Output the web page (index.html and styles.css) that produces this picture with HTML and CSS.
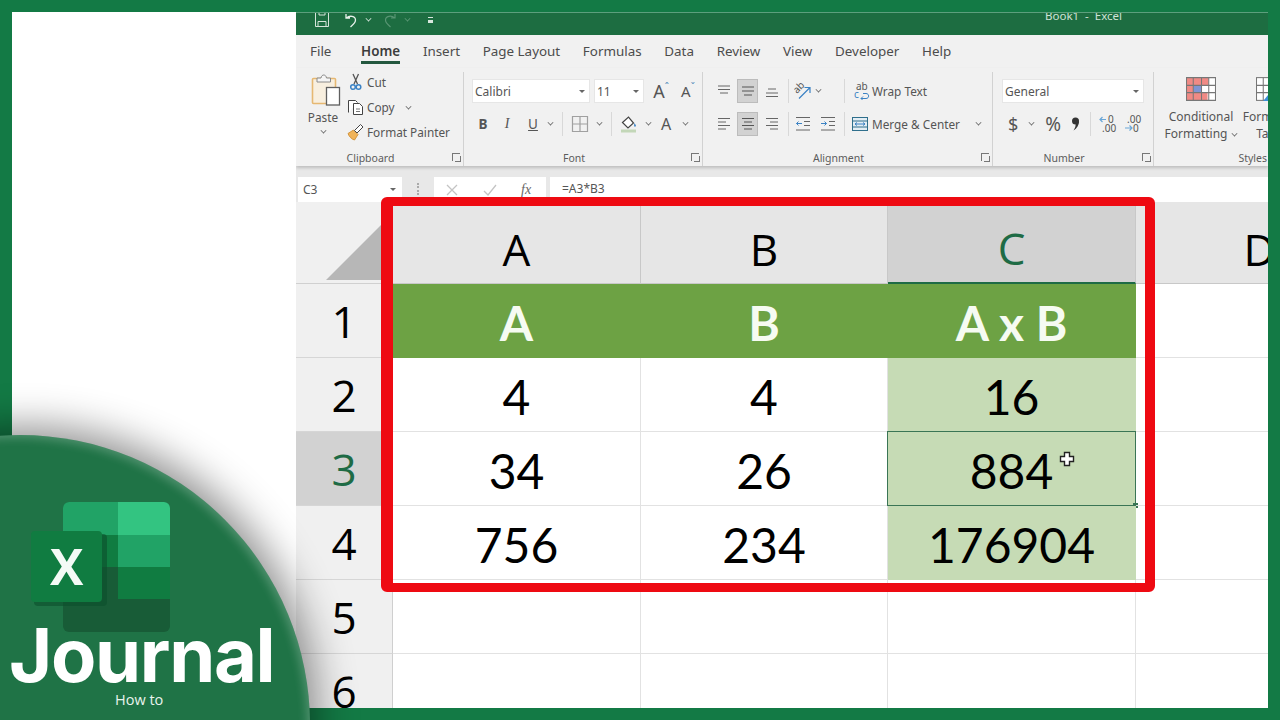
FILE: index.html
```html
<!DOCTYPE html>
<html lang="en">
<head>
<meta charset="utf-8">
<title>Book1 - Excel</title>
<link rel="stylesheet" href="styles.css">
</head>
<body>
<div class="frame">
  <div class="blank"></div>
  <main class="excel">
    <header class="titlebar">
      <div class="qat">
        <svg class="i16" viewBox="0 0 16 16"><path d="M1.500 -2h11l2 2v13.500h-13zM4 13.500v-5h8v5M5 -2v4h6v-4" fill="none" stroke="#d5e5da" stroke-width="1"/></svg>
        <svg class="i16 ml10" viewBox="0 0 16 16"><path d="M3 1v4h4M3.500 5c3-3 9-2 9 2 0 3-3 5-5 7" fill="none" stroke="#e8f1eb" stroke-width="1.300"/></svg>
        <span class="caret light"></span>
        <svg class="i16 ml8 dim" viewBox="0 0 16 16"><path d="M13 1v4h-4M12.500 5c-3-3-9-2-9 2 0 3 3 5 5 7" fill="none" stroke="#5f9a79" stroke-width="1.200"/></svg>
        <span class="caret dimcaret"></span>
        <span class="qatmore"></span>
      </div>
      <div class="doc-title">Book1 &nbsp;- &nbsp;Excel</div>
    </header>
    <nav class="tabs">
      <span class="tab t-file">File</span>
      <span class="tab active">Home</span>
      <span class="tab">Insert</span>
      <span class="tab">Page Layout</span>
      <span class="tab">Formulas</span>
      <span class="tab">Data</span>
      <span class="tab">Review</span>
      <span class="tab">View</span>
      <span class="tab">Developer</span>
      <span class="tab">Help</span>
    </nav>
    <section class="ribbon">
      <div class="group g-clip">
        <div class="g-body clip-body">
          <div class="paste">
            <svg class="paste-ico" viewBox="0 0 34 33"><rect x="5.500" y="5.500" width="23" height="25" rx="1" fill="#f8efdf" stroke="#e6b872" stroke-width="1.600"/><path d="M10 9V5h4c.5-4 5-4 5.500 0h4v4z" fill="#f5f5f5" stroke="#8a8a8a"/><rect x="19.500" y="14.500" width="13" height="17.500" fill="#fff" stroke="#5f5f5f" stroke-width="1.300"/></svg>
            <span class="paste-l">Paste</span>
            <span class="caret"></span>
          </div>
          <div class="clip-list">
            <div class="clip-row"><svg class="i18" viewBox="0 0 18 18"><path d="M6 1l4.500 10M11.500 1L7 11" fill="none" stroke="#555" stroke-width="1.300"/><circle cx="6" cy="14" r="2.300" fill="none" stroke="#3b82c4" stroke-width="1.500"/><circle cx="11.500" cy="14" r="2.300" fill="none" stroke="#3b82c4" stroke-width="1.500"/></svg><span>Cut</span></div>
            <div class="clip-row"><svg class="i18" viewBox="0 0 18 18"><path d="M1.500 14.500v-12h7l2 2" fill="#fff" stroke="#444"/><path d="M6.500 16.500v-11h6l3 3v8z" fill="#fff" stroke="#444"/><path d="M9 11h4M9 13.500h4" stroke="#777"/></svg><span>Copy</span><span class="caret after-copy"></span></div>
            <div class="clip-row"><svg class="i18" viewBox="0 0 18 18"><path d="M1 10.500l5.500-3.500 4.500 4.500-3.500 5.500c-2.500-.5-5.500-3.500-6.500-6.500z" fill="#f0b45a" stroke="#cf8f33" stroke-width=".9"/><path d="M7.500 7.500l6-6 2.500 2.500-6 6z" fill="#fff" stroke="#444"/></svg><span>Format Painter</span></div>
          </div>
        </div>
        <div class="g-label">Clipboard<span class="launcher"></span></div>
      </div>

      <div class="group g-font">
        <div class="g-body rows">
          <div class="row font-row1">
            <div class="combo c-font"><span>Calibri</span><span class="drop"></span></div>
            <div class="combo c-size"><span>11</span><span class="drop"></span></div>
            <span class="grow">A<sup class="tick blue">ˆ</sup></span>
            <span class="grow small">A<sup class="tick blue">ˇ</sup></span>
          </div>
          <div class="row font-row2">
            <b class="fmt">B</b>
            <i class="fmt serif">I</i>
            <u class="fmt">U</u>
            <span class="caret"></span>
            <span class="vsep"></span>
            <svg class="i18" viewBox="0 0 18 18"><path d="M1.500 1.500h15v15h-15zM9 1.500v15M1.500 9h15" fill="none" stroke="#a0a0a0" stroke-width="1.200"/></svg>
            <span class="caret"></span>
            <span class="vsep"></span>
            <svg class="i18" viewBox="0 0 18 18"><path d="M2.500 7.500l6-5.500 5 6-5.500 5z" fill="#fff" stroke="#444" stroke-width="1.200"/><path d="M14.500 8c1 1.800 2 2.500 1 3.500s-2-.3-1-3.500z" fill="#3b82c4"/><rect x="1" y="14.500" width="15" height="3" fill="#c3d7b8"/></svg>
            <span class="caret"></span>
            <span class="fcolor">A</span>
            <span class="caret"></span>
          </div>
        </div>
        <div class="g-label">Font<span class="launcher"></span></div>
      </div>

      <div class="group g-align">
        <div class="g-body rows">
          <div class="row al-row">
            <span class="al"><svg class="i14" viewBox="0 0 14 14"><path d="M1 2h12M1 5.500h12M3 9h8" stroke="#666" fill="none"/></svg></span>
            <span class="al on"><svg class="i14" viewBox="0 0 14 14"><path d="M1 3h12M1 7h12M3 11h8" stroke="#555" fill="none"/></svg></span>
            <span class="al"><svg class="i14" viewBox="0 0 14 14"><path d="M3 5h8M1 9h12M1 12.500h12" stroke="#666" fill="none"/></svg></span>
            <span class="vsep sep-a"></span>
            <svg class="i18 orient" viewBox="0 0 18 18"><text x="0" y="9" class="ab" transform="rotate(-45 5 7)">ab</text><path d="M5 16.500L15.500 6M10.500 5.500h5.500V11" fill="none" stroke="#3b82c4" stroke-width="1.200"/></svg>
            <span class="caret"></span>
            <span class="vsep wrap-sep"></span>
            <div class="cmd cmd-wrap"><svg class="i18" viewBox="0 0 18 18"><text x="3" y="8" class="ab">ab</text><text x="1" y="16" class="abc">c</text><path d="M8 16.500h5c3.500 0 3.500-5 0-5h-3M10 14.500l-2 2 2 2" fill="none" stroke="#3b82c4"/></svg><span>Wrap Text</span></div>
          </div>
          <div class="row al-row">
            <span class="al"><svg class="i14" viewBox="0 0 14 14"><path d="M1 1.500h12M1 5h8M1 8.500h12M1 12h8" stroke="#666" fill="none"/></svg></span>
            <span class="al on"><svg class="i14" viewBox="0 0 14 14"><path d="M1 1.500h12M3 5h8M1 8.500h12M3 12h8" stroke="#555" fill="none"/></svg></span>
            <span class="al"><svg class="i14" viewBox="0 0 14 14"><path d="M1 1.500h12M5 5h8M1 8.500h12M5 12h8" stroke="#666" fill="none"/></svg></span>
            <span class="vsep sep-b"></span>
            <svg class="i16 ind" viewBox="0 0 16 16"><path d="M1 1.500h14M9 5.500h6M9 9.500h6M1 14h14" stroke="#666" fill="none"/><path d="M7 7.500H1.500M3.500 5.500l-2 2 2 2" stroke="#3b82c4" fill="none"/></svg>
            <svg class="i16 ind" viewBox="0 0 16 16"><path d="M1 1.500h14M9 5.500h6M9 9.500h6M1 14h14" stroke="#666" fill="none"/><path d="M1 7.500h5.500M4.500 5.500l2 2-2 2" stroke="#3b82c4" fill="none"/></svg>
            <span class="vsep merge-sep"></span>
            <div class="cmd"><svg class="i16" viewBox="0 0 16 16"><rect x=".5" y="1.500" width="15" height="13" fill="#e3eef5" stroke="#2f6f8c"/><path d="M.5 5h15M.5 11h15" stroke="#2f6f8c"/><path d="M3 8h10M5 6.500L3 8l2 1.500M11 6.500L13 8l-2 1.500" fill="none" stroke="#3b82c4"/></svg><span>Merge &amp; Center</span><span class="caret after-merge"></span></div>
          </div>
        </div>
        <div class="g-label">Alignment<span class="launcher"></span></div>
      </div>

      <div class="group g-num">
        <div class="g-body rows">
          <div class="row"><div class="combo c-num"><span>General</span><span class="drop"></span></div></div>
          <div class="row num-row">
            <span class="sym dollar">$</span>
            <span class="caret"></span>
            <span class="sym pct">%</span>
            <svg class="comma-ico" viewBox="0 0 10 14"><circle cx="4.500" cy="4" r="3.500" fill="#333"/><path d="M8 4c0 4-2 7.500-5.500 9.500C4 11 4.800 9.500 4.500 7.500z" fill="#333"/></svg>
            <span class="vsep"></span>
            <svg class="dec" viewBox="0 0 18 24"><path d="M7 7.500H1M3.500 5L1 7.500 3.500 10" fill="none" stroke="#6aa7d8" stroke-width="1.200"/><text x="9" y="11" class="dg">0</text><text x="3" y="20" class="dg">.00</text></svg>
            <svg class="dec" viewBox="0 0 18 24"><text x="3" y="11" class="dg">.00</text><path d="M1 16h7M5.500 13.500L8 16l-2.500 2.500" fill="none" stroke="#6aa7d8" stroke-width="1.200"/><text x="9" y="20" class="dg">0</text></svg>
          </div>
        </div>
        <div class="g-label">Number<span class="launcher"></span></div>
      </div>

      <div class="group g-styles">
        <div class="g-body styles-body">
          <div class="big cf">
            <svg class="i26" viewBox="0 0 29 23"><rect x="0" y="0" width="22" height="8" fill="#f08a85"/><rect x="0" y="8" width="7" height="7" fill="#f08a85"/><rect x="7" y="8" width="8" height="7" fill="#7f95d4"/><rect x="15" y="8" width="14" height="7" fill="#fff"/><rect x="22" y="0" width="7" height="8" fill="#fff"/><rect x="0" y="15" width="21" height="8" fill="#f08a85"/><rect x="21" y="15" width="8" height="8" fill="#fff"/><path d="M.5 .5h28v22H.5zM.5 8h28M.5 15h28M7 .5v22M15 .5v22M22 .5v22" stroke="#777" fill="none"/></svg>
            <span>Conditional</span>
            <span>Formatting<i class="caret inline"></i></span>
          </div>
          <div class="big ft">
            <svg class="i26" viewBox="0 0 29 23"><rect x=".5" y=".5" width="28" height="22" fill="#fff" stroke="#777"/><path d="M.5 8h28M.5 15h28M7 .5v22M15 .5v22M22 .5v22" stroke="#777" fill="none"/><path d="M7 23l4-5 4-5 3 3-4 7z" fill="#3b8fd8"/></svg>
            <span>Format as</span>
            <span>Table</span>
          </div>
        </div>
        <div class="g-label label-styles">Styles</div>
      </div>
    </section>
    <div class="formula">
      <div class="namebox"><span>C3</span><span class="drop"></span></div>
      <span class="grip"></span>
      <div class="fx-btns">
        <svg class="i14" viewBox="0 0 14 14"><path d="M2 2l10 10M12 2L2 12" stroke="#c4c4c4" stroke-width="1.300"/></svg>
        <svg class="i14" viewBox="0 0 14 14"><path d="M1 8l4 4 8-10" stroke="#c4c4c4" fill="none" stroke-width="1.300"/></svg>
        <em class="fx">fx</em>
      </div>
      <div class="finput">=A3*B3</div>
    </div>
    <section class="sheet">
      <div class="corner"><span class="tri"></span></div>
      <div class="ch">A</div><div class="ch">B</div><div class="ch sel">C</div><div class="ch">D</div>

      <div class="rh">1</div><div class="cell th">A</div><div class="cell th">B</div><div class="cell th">A x B</div><div class="cell"></div>
      <div class="rh">2</div><div class="cell">4</div><div class="cell">4</div><div class="cell res">16</div><div class="cell"></div>
      <div class="rh sel">3</div><div class="cell">34</div><div class="cell">26</div>
      <div class="cell res active-cell">884
        <svg class="cursor" viewBox="0 0 16 16"><path d="M5.500 1.500h5v4h4v5h-4v4h-5v-4h-4v-5h4z" fill="#fff" stroke="#222" stroke-width="1.400"/></svg>
        <span class="handle"></span>
      </div>
      <div class="cell"></div>
      <div class="rh">4</div><div class="cell">756</div><div class="cell">234</div><div class="cell res">176904</div><div class="cell"></div>
      <div class="rh">5</div><div class="cell"></div><div class="cell"></div><div class="cell"></div><div class="cell"></div>
      <div class="rh">6</div><div class="cell"></div><div class="cell"></div><div class="cell"></div><div class="cell"></div>
    </section>
    <div class="redbox"></div>
  </main>
</div>
<div class="badge-clip">
  <aside class="badge">
    <svg class="xl-logo" viewBox="0 0 146 136">
      <rect x="39" y="3" width="107" height="130" rx="6" fill="#185c37"/>
      <path d="M39 36V9a6 6 0 0 1 6-6h49v33z" fill="#21a366"/>
      <path d="M94 3h46a6 6 0 0 1 6 6v27H94z" fill="#33c481"/>
      <rect x="39" y="36" width="55" height="32" fill="#107c41"/>
      <rect x="94" y="36" width="52" height="32" fill="#21a366"/>
      <rect x="39" y="68" width="55" height="32" fill="#185c37"/>
      <rect x="94" y="68" width="52" height="32" fill="#107c41"/>
      <rect x="10" y="35" width="73" height="72" rx="4" fill="#0c4f2b" opacity=".6"/>
      <rect x="7" y="32" width="71" height="71" rx="4" fill="#107c41"/>
    </svg>
    <span class="xl-x">X</span>
    <div class="journal">Journal</div>
    <div class="howto">How to</div>
  </aside>
</div>
</body>
</html>
```
FILE: styles.css
```css
* { box-sizing: border-box; }
html, body { margin: 0; height: 100%; }
body { position: relative; overflow: hidden; background: #137a45; font-family: "Noto Sans", "Open Sans", sans-serif; color: #4a4a4a; }

.frame { display: flex; width: 1280px; height: 720px; padding: 12px; }
.blank { width: 284px; background: #fff; flex: none; }
.excel { position: relative; width: 972px; flex: none; display: flex; flex-direction: column; overflow: hidden; background: #fff; }

.titlebar { height: 23px; flex: none; background: #1d6d41; border-top: 1px solid #5d9f7d; display: flex; overflow: hidden; position: relative; }
.qat { display: flex; align-items: flex-start; padding-left: 18px; }
.qat svg { flex: none; }
.ml10 { margin-left: 13px; }
.ml8 { margin-left: 11px; }
.dim { opacity: .9; }
.qatmore { width: 5px; height: 6px; margin: 4px 0 0 18px; border-top: 1px solid #d9e7de; border-bottom: 3px solid #d9e7de; }
.doc-title { margin: -4px 0 0 612px; font-size: 11.500px; line-height: 14px; color: #cfe2d6; white-space: nowrap; }

.i14 { width: 14px; height: 14px; display: block; flex: none; }
.i16 { width: 16px; height: 16px; display: block; flex: none; }
.i18 { width: 18px; height: 18px; display: block; flex: none; }
.i26 { width: 30px; height: 24px; display: block; flex: none; }

.caret { display: inline-block; width: 5px; height: 5px; border-right: 1.200px solid #666; border-bottom: 1.200px solid #666; transform: rotate(45deg) scale(.85); flex: none; }
.caret.light { border-color: #dce9e1; margin: 3px 0 0 7px; }
.caret.dimcaret { border-color: #5f9a79; margin: 3px 0 0 7px; }
.drop { width: 0; height: 0; border-left: 3px solid transparent; border-right: 3px solid transparent; border-top: 3px solid #666; flex: none; }

.tabs { height: 33px; flex: none; background: #f1f1f1; display: flex; align-items: center; padding: 0 0 2px 14px; gap: 22.700px; font-size: 13.400px; color: #4c4c4c; }
.tab { position: relative; line-height: 20px; white-space: nowrap; }
.t-file { margin-right: 7px; }
.tab.active { color: #3c3c3c; font-weight: 600; }
.tab.active::after { content: ""; position: absolute; left: 0; right: 0; bottom: -3px; height: 3px; background: #24583f; }

.ribbon { height: 98px; flex: none; display: flex; background: #f1f1f1; box-shadow: 0 2px 3px rgba(0,0,0,.18); position: relative; z-index: 1; font-size: 11.800px; color: #555; overflow: hidden; }
.group { display: flex; flex-direction: column; flex: none; border-right: 1px solid #d2d2d2; margin-top: 4px; }
.g-clip { width: 168px; }
.g-font { width: 239px; }
.g-align { width: 290px; }
.g-num { width: 161px; }
.g-styles { width: 114px; border-right: 0; }
.g-body { height: 81px; display: flex; }
.g-label { height: 17px; font-size: 10.500px; line-height: 16px; text-align: center; padding-right: 18px; position: relative; color: #5c5c5c; }
.label-styles { text-align: right; padding-right: 1px; }
.launcher { position: absolute; right: 3px; top: 3px; width: 8px; height: 8px; border-left: 1px solid #777; border-top: 1px solid #777; }
.launcher::after { content: ""; position: absolute; right: -1px; bottom: -1px; width: 5px; height: 5px; border-right: 1px solid #777; border-bottom: 1px solid #777; }

.clip-body { padding: 1px 0 0 12px; gap: 9px; }
.paste { width: 30px; display: flex; flex-direction: column; align-items: center; }
.paste-ico { width: 34px; height: 33px; display: block; flex: none; align-self: flex-start; margin-left: -1px; }
.paste-l { margin-top: 4px; line-height: 15px; white-space: nowrap; }
.paste .caret { margin-top: 3px; }
.clip-list { display: flex; flex-direction: column; gap: 7px; }
.clip-row { display: flex; align-items: center; gap: 2px; height: 18px; white-space: nowrap; }
.after-copy { margin: -2px 0 0 9px; }

.rows { flex-direction: column; padding-top: 7px; gap: 9px; }
.row { display: flex; align-items: center; height: 24px; flex: none; }
.font-row1 { padding-left: 8px; gap: 4px; }
.combo { height: 24px; background: #fff; border: 1px solid #e6e6e6; display: flex; align-items: center; justify-content: space-between; padding: 0 4px 0 2px; font-size: 12px; color: #555; }
.c-font { width: 118px; }
.c-size { width: 50px; }
.c-num { width: 142px; margin-left: 9px; }
.grow { width: 22px; text-align: center; font-size: 18px; line-height: 20px; margin-left: 2px; white-space: nowrap; }
.grow.small { font-size: 15px; margin-left: 1px; }
.tick { font-size: 10px; line-height: 0; color: #666; }
.tick.blue { color: #5f93bd; }
.font-row2 { padding-left: 7px; }
.fmt { width: 24px; text-align: center; font-size: 13.500px; color: #555; font-style: normal; }
u.fmt { margin-left: 2px; }
.serif { font-family: "Liberation Serif", serif; font-style: italic; font-size: 14px; }
.font-row2 .caret { margin: -3px 0 0 3px; }
.vsep { width: 1px; height: 24px; background: #d8d8d8; flex: none; margin: 0 7px 0 9px; }
.font-row2 .i18 { margin-left: 1px; }
.fcolor { font-size: 16px; margin-left: 10px; width: 12px; }
.font-row2 .fcolor + .caret { margin-left: 10px; }
.font-row2 svg + .caret { margin-left: 8px; }

.al-row { padding-left: 10px; }
.al { width: 21px; height: 24px; margin-right: 3px; display: flex; align-items: center; justify-content: center; flex: none; }
.al.on { background: #d2d2d2; border: 1px solid #bcbcbc; }
.sep-a { margin: 0 5px 0 3px; }
.sep-b { margin: 0 6px 0 3px; }
.orient { margin-right: 4px; }
.orient + .caret { margin-top: -3px; }
.wrap-sep { margin: 0 8px 0 23px; }
.ind { margin-right: 9px; }
.merge-sep { margin: 0 7px 0 -1px; }
.cmd { display: flex; align-items: center; gap: 4px; white-space: nowrap; }
.cmd-wrap { gap: 1px; }
.after-merge { margin: -3px 0 0 12px; }
.ab { font: 10px "Noto Sans", sans-serif; fill: #555; }
.abc { font: 10px "Noto Sans", sans-serif; fill: #3b82c4; }
.dg { font: 10px "Noto Sans", sans-serif; fill: #555; }

.num-row { padding-left: 15px; }
.sym { flex: none; text-align: center; color: #555; }
.dollar { font-size: 18px; margin-right: 11px; }
.pct { font-size: 19px; margin-left: 11px; }
.comma-ico { width: 10px; height: 14px; flex: none; margin: 0 0 0 10px; display: block; }
.num-row .caret { margin-top: -3px; }
.num-row .vsep { margin: 0 8px 0 9px; }
.dec { width: 18px; height: 24px; flex: none; display: block; margin-right: 7px; }

.styles-body { padding: 5px 0 0 14px; gap: 9px; overflow: hidden; }
.big { width: 66px; flex: none; display: flex; flex-direction: column; align-items: center; line-height: 17px; white-space: nowrap; font-size: 12px; }
.big .i26 { margin-bottom: 7px; }
.big.ft { width: 56px; }
.caret.inline { margin: 0 0 2px 5px; }

.formula { height: 36px; flex: none; background: #e8e8e8; display: flex; align-items: flex-start; padding: 11px 0 0 2px; font-size: 12px; color: #555; }
.namebox { width: 104px; height: 25px; background: #fff; display: flex; align-items: center; justify-content: space-between; padding: 0 6px 0 5px; flex: none; }
.grip { width: 2px; height: 12px; margin: 6px 15px 0 15px; border-left: 2px dotted #aaa; flex: none; }
.fx-btns { width: 112px; height: 25px; background: #fff; display: flex; align-items: center; gap: 24px; padding-left: 11px; flex: none; }
.fx { font-family: "Liberation Serif", serif; font-size: 14px; color: #666; }
.finput { flex: 1; height: 25px; margin-left: 4px; background: #fff; padding: 4px 0 0 12px; line-height: 16px; }

.sheet { flex: 1; min-height: 0; display: grid; grid-template-columns: 97px 248px 247px 248px 248px; grid-template-rows: 82px repeat(6, 74px); overflow: hidden; background: #fff; font-family: "Lato", "Noto Sans", sans-serif; color: #000; }
.corner { background: #f0f0f0; border-right: 1px solid #d0d0d0; border-bottom: 1px solid #d0d0d0; position: relative; }
.tri { position: absolute; right: 0; bottom: 3px; width: 0; height: 0; border-left: 66px solid transparent; border-bottom: 66px solid #b7b7b7; }
.ch { background: #e6e6e6; border-right: 1px solid #c8c8c8; border-bottom: 1px solid #c8c8c8; display: flex; justify-content: center; align-items: flex-end; font-family: "Open Sans", sans-serif; font-size: 44px; line-height: 60px; padding-bottom: 4px; }
.ch.sel { background: #d2d2d2; color: #1e6b45; border-bottom: 2px solid #1e6b45; }
.rh { background: #f0f0f0; border-right: 1px solid #cfcfcf; border-bottom: 1px solid #d6d6d6; display: flex; align-items: center; justify-content: center; font-family: "Open Sans", sans-serif; font-size: 44px; }
.rh.sel { background: #d2d2d2; color: #1e6b45; }
.cell { border-right: 1px solid #e2e2e2; border-bottom: 1px solid #e2e2e2; display: flex; align-items: center; justify-content: center; font-size: 48px; padding-top: 3px; position: relative; white-space: nowrap; }
.th { background: #6da244; color: #f6fbf2; font-weight: 700; border-color: #6da244; }
.res { background: #c6dbb5; border-color: #c6dbb5; }
.active-cell { border: 1.500px solid #3a7555; margin: -1px 0 0 -1px; }
.cursor { position: absolute; left: 171px; top: 19px; width: 16px; height: 16px; }
.handle { position: absolute; right: -3px; bottom: -3px; width: 5px; height: 5px; background: #3a7555; }
.redbox { position: absolute; left: 85px; top: 185px; width: 774px; height: 395px; border: solid #ee0a12; border-width: 9px 10px 9px 12px; border-radius: 6px; pointer-events: none; }

.badge-clip { position: absolute; left: 0; top: 0; width: 400px; height: 720px; overflow: hidden; pointer-events: none; z-index: 2; }
.badge { position: absolute; left: -270px; top: 435px; width: 580px; height: 580px; background: #1f7346; border-radius: 50%; box-shadow: 6px -8px 40px rgba(0,0,0,.45), inset -3px 3px 10px rgba(255,255,255,.22); }
.xl-logo { position: absolute; left: 294px; top: 64px; width: 146px; height: 136px; }
.xl-x { position: absolute; left: 320px; top: 83px; color: #f4fbf6; font: 700 50px/60px "Open Sans", sans-serif; transform: translateY(18px); }
.journal { position: absolute; left: 279px; top: 182px; font: 700 74px/76px "Inter", sans-serif; letter-spacing: -1.300px; color: #fff; white-space: nowrap; }
.howto { position: absolute; left: 385px; top: 256px; font: 14.500px/18px "Open Sans", sans-serif; color: #e9f3ed; white-space: nowrap; }
```
